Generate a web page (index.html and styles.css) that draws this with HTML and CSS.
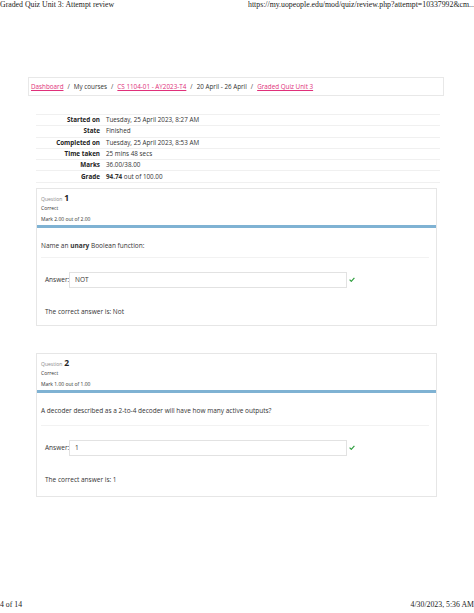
FILE: index.html
```html
<!DOCTYPE html>
<html>
<head>
<meta charset="utf-8">
<title>Graded Quiz Unit 3: Attempt review</title>
<link rel="stylesheet" href="styles.css">
</head>
<body>
<div class="sheet">
  <div class="print-header">
    <div class="print-title">Graded Quiz Unit 3: Attempt review</div>
    <div class="print-url">https://my.uopeople.edu/mod/quiz/review.php?attempt=10337992&amp;cm...</div>
  </div>

  <div class="content">
    <nav class="breadcrumb">
      <a href="#">Dashboard</a><span class="sep">/</span><span>My courses</span><span class="sep">/</span><a href="#">CS 1104-01 - AY2023-T4</a><span class="sep">/</span><span>20 April - 26 April</span><span class="sep">/</span><a href="#">Graded Quiz Unit 3</a>
    </nav>

    <table class="summary">
      <tr><th>Started on</th><td>Tuesday, 25 April 2023, 8:27 AM</td></tr>
      <tr><th>State</th><td>Finished</td></tr>
      <tr><th>Completed on</th><td>Tuesday, 25 April 2023, 8:53 AM</td></tr>
      <tr><th>Time taken</th><td>25 mins 48 secs</td></tr>
      <tr><th>Marks</th><td>36.00/38.00</td></tr>
      <tr><th>Grade</th><td><b>94.74</b> out of 100.00</td></tr>
    </table>

    <div class="question">
      <div class="q-info">
        <div class="q-no"><span class="q-label">Question</span> <span class="q-num">1</span></div>
        <div class="q-state">Correct</div>
        <div class="q-grade">Mark 2.00 out of 2.00</div>
      </div>
      <div class="q-bar"></div>
      <div class="q-body">
        <div class="q-text">Name an <b>unary</b> Boolean function:</div>
        <div class="q-answer">
          <span class="a-label">Answer:</span>
          <span class="a-input">NOT</span>
          <svg class="a-check" viewBox="0 0 10 8" width="6" height="5"><path d="M1 4.2 L3.8 7 L9 1.2" fill="none" stroke="#2e9e3e" stroke-width="2"/></svg>
        </div>
        <div class="q-right">The correct answer is: Not</div>
      </div>
    </div>

    <div class="question q2">
      <div class="q-info">
        <div class="q-no"><span class="q-label">Question</span> <span class="q-num">2</span></div>
        <div class="q-state">Correct</div>
        <div class="q-grade">Mark 1.00 out of 1.00</div>
      </div>
      <div class="q-bar"></div>
      <div class="q-body">
        <div class="q-text">A decoder described as a 2-to-4 decoder will have how many active outputs?</div>
        <div class="q-answer">
          <span class="a-label">Answer:</span>
          <span class="a-input">1</span>
          <svg class="a-check" viewBox="0 0 10 8" width="6" height="5"><path d="M1 4.2 L3.8 7 L9 1.2" fill="none" stroke="#2e9e3e" stroke-width="2"/></svg>
        </div>
        <div class="q-right">The correct answer is: 1</div>
      </div>
    </div>
  </div>

  <div class="print-footer">
    <div class="page-no">4 of 14</div>
    <div class="print-date">4/30/2023, 5:36 AM</div>
  </div>
</div>
</body>
</html>
```

FILE: styles.css
```css
html, body {
  margin: 0;
  padding: 0;
  background: #ffffff;
}

.sheet {
  width: 474px;
  height: 613px;
  display: flex;
  flex-direction: column;
  overflow: hidden;
  color: #1d2125;
}

.print-header {
  display: grid;
  grid-template-columns: 248px 226px;
  font-family: "Liberation Serif", "Times New Roman", serif;
  font-size: 7.8px;
  line-height: 10px;
  color: #222;
  white-space: nowrap;
}

.print-title,
.print-url {
  overflow: hidden;
}

.content {
  padding: 0 29px 0 28px;
  font-family: "Open Sans", "Noto Sans", sans-serif;
}

.breadcrumb {
  margin-top: 67px;
  height: 19px;
  width: 416px;
  box-sizing: border-box;
  border: 1px solid #e8e8e8;
  display: flex;
  align-items: center;
  padding-left: 2px;
  font-size: 6.3px;
  white-space: nowrap;
  color: #333;
}

.breadcrumb a {
  color: #e0307a;
  text-decoration: underline;
}

.breadcrumb .sep {
  margin: 0 4px;
  color: #444;
}

.summary {
  margin-top: 18px;
  margin-left: 8px;
  width: 404px;
  border-collapse: collapse;
  font-size: 6.3px;
  color: #333;
}

.summary th,
.summary td {
  height: 10.3px;
  padding: 0;
  border-bottom: 1px solid #f0f0f0;
  line-height: 10px;
  text-align: left;
  white-space: nowrap;
}

.summary tr:first-child th,
.summary tr:first-child td {
  border-top: 1px solid #f0f0f0;
}

.summary th {
  width: 64px;
  text-align: right;
  font-weight: 700;
  padding-right: 6px;
  color: #222;
}

.question {
  margin-top: 5px;
  margin-left: 8px;
  width: 401px;
  box-sizing: border-box;
  border: 1px solid #e6e6e6;
  font-size: 6px;
}

.question.q2 {
  margin-top: 27px;
}

.q-info {
  padding: 3px 6px 0 4px;
  height: 36px;
  box-sizing: border-box;
}

.q-no {
  height: 11px;
  line-height: 11px;
  display: flex;
  align-items: baseline;
  gap: 2px;
}

.q-label {
  font-size: 5px;
  color: #888;
}

.q-num {
  font-size: 8.5px;
  font-weight: 700;
  color: #222;
}

.q-state,
.q-grade {
  font-size: 5px;
  height: 11px;
  line-height: 11px;
  color: #333;
}

.q-bar {
  height: 3px;
  background: #7fb2d3;
}

.q-body {
  padding: 13px 7px 8px 4px;
  font-size: 6.5px;
  color: #333;
}

.q-text {
  line-height: 10px;
  padding-bottom: 6px;
  border-bottom: 1px solid #f2f2f2;
}

.q2 .q-text {
  padding-bottom: 9px;
}

.q2 .q-body {
  padding-bottom: 11px;
}

.q-answer {
  display: flex;
  align-items: center;
  margin-top: 14px;
  padding-left: 4px;
}

.a-label {
  width: 24px;
}

.a-input {
  width: 278px;
  height: 16px;
  box-sizing: border-box;
  border: 1px solid #e2e2e2;
  display: flex;
  align-items: center;
  padding-left: 5px;
}

.a-check {
  margin-left: 2px;
}

.q-right {
  margin-top: 19px;
  padding-left: 4px;
  line-height: 10px;
}

.print-footer {
  margin-top: auto;
  display: flex;
  justify-content: space-between;
  font-family: "Liberation Serif", "Times New Roman", serif;
  font-size: 7.8px;
  line-height: 10px;
  height: 13px;
  color: #222;
  white-space: nowrap;
}
```
